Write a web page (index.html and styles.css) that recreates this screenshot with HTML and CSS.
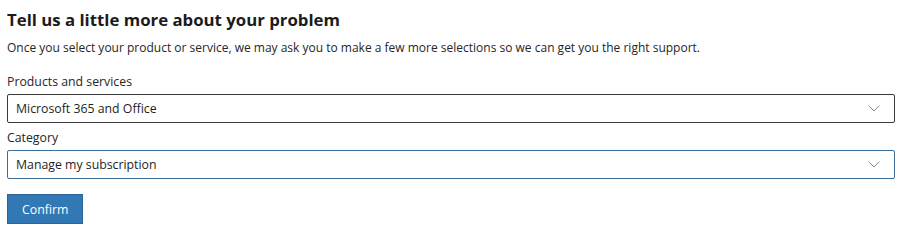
FILE: index.html
```html
<!DOCTYPE html>
<html lang="en">
<head>
  <meta charset="UTF-8">
  <title>Tell us more</title>
  <link rel="stylesheet" href="styles.css">
</head>
<body>
  <div class="problem-form">
    <h2>Tell us a little more about your problem</h2>
    <p class="intro">Once you select your product or service, we may ask you to make a few more selections so we can get you the right support.</p>

    <label class="field-label" for="product">Products and services</label>
    <div class="select-box">
      <span>Microsoft 365 and Office</span>
      <svg class="chevron" width="12" height="7" viewBox="0 0 12 7"><path d="M0.5 0.5 L6 6 L11.5 0.5" fill="none" stroke="#8a8a8a" stroke-width="1"/></svg>
    </div>

    <label class="field-label" for="category">Category</label>
    <div class="select-box focused">
      <span>Manage my subscription</span>
      <svg class="chevron" width="12" height="7" viewBox="0 0 12 7"><path d="M0.5 0.5 L6 6 L11.5 0.5" fill="none" stroke="#8a8a8a" stroke-width="1"/></svg>
    </div>

    <button class="confirm-btn">Confirm</button>
  </div>
</body>
</html>
```

FILE: styles.css
```css
* { box-sizing: border-box; }
body {
  margin: 0;
  background: #fff;
  font-family: 'Open Sans', 'Noto Sans', sans-serif;
  color: #1e1e1e;
}
.problem-form {
  padding: 8px 18px 0 7px;
  display: flex;
  flex-direction: column;
  align-items: flex-start;
}
.problem-form h2 {
  margin: 0;
  font-size: 16.8px;
  line-height: 24px;
  font-weight: 700;
  color: #1b1b1b;
}
.intro {
  margin: 7px 0 0 0;
  font-size: 12px;
  line-height: 18px;
  color: #262626;
}
.field-label {
  font-size: 12.3px;
  line-height: 18px;
  color: #262626;
}
.intro + .field-label {
  margin-top: 16px;
}
.select-box + .field-label {
  margin-top: 6px;
}
.select-box {
  margin-top: 3px;
  width: 100%;
  height: 29px;
  border: 1px solid #3b3b3b;
  border-radius: 2px;
  padding: 0 14px 0 8px;
  display: flex;
  align-items: center;
  justify-content: space-between;
  font-size: 12.3px;
  color: #1e1e1e;
}
.select-box.focused {
  border-color: #3a6f9c;
}
.confirm-btn {
  margin-top: 15px;
  height: 30px;
  padding: 0 14px;
  background: #3278b4;
  color: #fff;
  border: 1px solid #2a6499;
  font-family: inherit;
  font-size: 12.3px;
}
```
